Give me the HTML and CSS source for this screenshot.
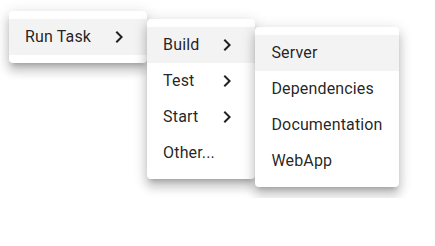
FILE: index.html
```html
<!DOCTYPE html>
<html lang="en">
<head>
    <meta charset="UTF-8">
    <title>Nested Menu</title>
    <link rel="stylesheet" href="styles.css">
</head>
<body>
    <div class="menus">
        <ul class="menu level-1">
            <li class="menu-item active">
                <span class="item-text">Run Task</span>
                <svg class="chevron" viewBox="0 0 24 24"><path d="M10 6 8.59 7.41 13.17 12l-4.58 4.59L10 18l6-6z"/></svg>
            </li>
        </ul>

        <ul class="menu level-2">
            <li class="menu-item active">
                <span class="item-text">Build</span>
                <svg class="chevron" viewBox="0 0 24 24"><path d="M10 6 8.59 7.41 13.17 12l-4.58 4.59L10 18l6-6z"/></svg>
            </li>
            <li class="menu-item">
                <span class="item-text">Test</span>
                <svg class="chevron" viewBox="0 0 24 24"><path d="M10 6 8.59 7.41 13.17 12l-4.58 4.59L10 18l6-6z"/></svg>
            </li>
            <li class="menu-item">
                <span class="item-text">Start</span>
                <svg class="chevron" viewBox="0 0 24 24"><path d="M10 6 8.59 7.41 13.17 12l-4.58 4.59L10 18l6-6z"/></svg>
            </li>
            <li class="menu-item">
                <span class="item-text">Other...</span>
            </li>
        </ul>

        <ul class="menu level-3">
            <li class="menu-item active"><span class="item-text">Server</span></li>
            <li class="menu-item"><span class="item-text">Dependencies</span></li>
            <li class="menu-item"><span class="item-text">Documentation</span></li>
            <li class="menu-item"><span class="item-text">WebApp</span></li>
        </ul>
    </div>
</body>
</html>
```

FILE: styles.css
```css
* {
    margin: 0;
    padding: 0;
    box-sizing: border-box;
}

body {
    font-family: Roboto, "Liberation Sans", sans-serif;
    background: #ffffff;
    color: rgba(0, 0, 0, 0.87);
    padding: 11px 9px;
}

.menus {
    display: flex;
    align-items: flex-start;
}

.menu {
    list-style: none;
    background: #ffffff;
    border-radius: 4px;
    padding: 8px 0;
    width: max-content;
    box-shadow: 0 5px 5px -3px rgba(0, 0, 0, 0.2),
                0 8px 10px 1px rgba(0, 0, 0, 0.14),
                0 3px 14px 2px rgba(0, 0, 0, 0.12);
}

.level-2 {
    margin-top: 8px;
}

.level-3 {
    margin-top: 16px;
}

.menu-item {
    display: flex;
    align-items: center;
    height: 36px;
    padding: 0 16px;
    font-size: 16px;
    line-height: 24px;
    letter-spacing: 0.15px;
    white-space: nowrap;
}

.menu-item.active {
    background: #f3f3f3;
}

.item-text {
    flex: 1;
}

.chevron {
    width: 24px;
    height: 24px;
    margin-left: 16px;
    fill: rgba(0, 0, 0, 0.87);
}
```
